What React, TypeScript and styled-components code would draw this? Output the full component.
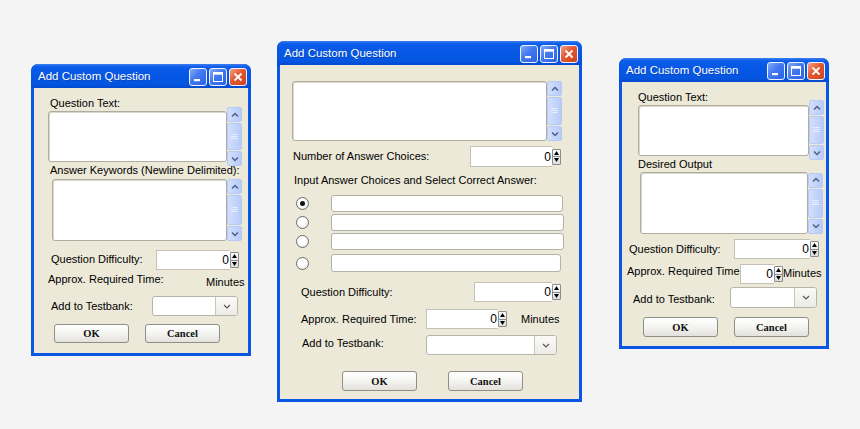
import React from "react";
import styled, { createGlobalStyle } from "styled-components";

const GlobalStyle = createGlobalStyle`
  html, body {
    margin: 0;
    padding: 0;
    background: #f4f4f4;
  }
  body {
    font-family: "Liberation Sans", Arial, sans-serif;
  }
`;

const Desktop = styled.div`
  position: relative;
  width: 860px;
  height: 429px;
  overflow: hidden;
  background: #f4f4f4;
`;

const WindowFrame = styled.div<{ $x: number; $y: number; $w: number; $h: number }>`
  position: absolute;
  left: ${(p) => p.$x}px;
  top: ${(p) => p.$y}px;
  width: ${(p) => p.$w}px;
  height: ${(p) => p.$h}px;
  display: flex;
  flex-direction: column;
  background: #0b56e3;
  border-radius: 7px 7px 0 0;
`;

const TitleBar = styled.div`
  height: 24px;
  flex-shrink: 0;
  display: flex;
  align-items: center;
  justify-content: space-between;
  padding: 0 4px 0 7px;
  border-radius: 7px 7px 0 0;
  background: linear-gradient(
    to bottom,
    #3a7ef2 0%,
    #0b5ce8 12%,
    #0658e4 50%,
    #0455df 85%,
    #0349cf 100%
  );
`;

const TitleText = styled.span`
  color: #fff;
  font-size: 11.5px;
  white-space: nowrap;
  text-shadow: 1px 1px 0 rgba(10, 30, 120, 0.35);
`;

const TitleButtons = styled.div`
  display: flex;
  gap: 2px;
  align-self: flex-end;
  margin-bottom: 2px;
`;

const TitleButton = styled.div<{ $close?: boolean }>`
  width: 18px;
  height: 18px;
  box-sizing: border-box;
  border: 1px solid #eef3ff;
  border-radius: 3px;
  display: flex;
  align-items: center;
  justify-content: center;
  background: ${(p) =>
    p.$close
      ? "linear-gradient(135deg, #f3a083 0%, #e2582f 45%, #cd4320 100%)"
      : "linear-gradient(135deg, #86a9f8 0%, #4278ef 45%, #2d62e6 100%)"};
`;

const Body = styled.div`
  flex: 1;
  margin: 0 3px 3px;
  background: #ece9d8;
  display: flex;
  flex-direction: column;
`;

const Label = styled.div<{ $ml?: number; $mt?: number; $w?: number }>`
  font-size: 11px;
  line-height: 13px;
  color: #000;
  white-space: nowrap;
  flex-shrink: 0;
  margin-left: ${(p) => p.$ml ?? 0}px;
  margin-top: ${(p) => p.$mt ?? 0}px;
  width: ${(p) => (p.$w ? `${p.$w}px` : "auto")};
`;

const ScrollArea = styled.div<{ $ml: number; $mt: number }>`
  display: flex;
  align-items: center;
  margin-left: ${(p) => p.$ml}px;
  margin-top: ${(p) => p.$mt}px;
`;

const TextBox = styled.div<{ $w: number; $h: number }>`
  width: ${(p) => p.$w}px;
  height: ${(p) => p.$h}px;
  box-sizing: border-box;
  background: #fff;
  border: 1px solid #aeaba0;
  border-radius: 3px;
  box-shadow: inset 1px 1px 0 #dcd9cf;
`;

const ScrollBar = styled.div<{ $h: number }>`
  width: 15px;
  height: ${(p) => p.$h}px;
  display: flex;
  flex-direction: column;
  gap: 1px;
  flex-shrink: 0;
`;

const ScrollButton = styled.div`
  height: 15px;
  flex-shrink: 0;
  box-sizing: border-box;
  border: 1px solid #b7c9f5;
  border-radius: 2px;
  background: linear-gradient(to right, #d3defc, #c2d3fb 60%, #b7cbf9);
  display: flex;
  align-items: center;
  justify-content: center;
`;

const Thumb = styled(ScrollButton)`
  flex: 1;
  height: auto;
`;

const Field = styled.div<{ $mt: number; $pl: number }>`
  display: flex;
  align-items: flex-start;
  margin-top: ${(p) => p.$mt}px;
  padding-left: ${(p) => p.$pl}px;
`;

const SpinWrap = styled.div`
  display: flex;
  align-items: center;
  flex-shrink: 0;
`;

const SpinBox = styled.div<{ $w: number; $h: number }>`
  width: ${(p) => p.$w}px;
  height: ${(p) => p.$h}px;
  box-sizing: border-box;
  background: #fff;
  border: 1px solid #c3c1b8;
  border-right: none;
  font-size: 12px;
  color: #000;
  display: flex;
  align-items: center;
  justify-content: flex-end;
  padding-right: 1px;
`;

const SpinArrows = styled.div`
  width: 9px;
  height: 16px;
  box-sizing: border-box;
  border: 1px solid #8c8c8c;
  border-radius: 1px;
  background: linear-gradient(to bottom, #fdfdfd, #dedede);
  display: flex;
  flex-direction: column;
`;

const SpinArrow = styled.div<{ $down?: boolean }>`
  flex: 1;
  display: flex;
  align-items: center;
  justify-content: center;
  border-top: ${(p) => (p.$down ? "1px solid #8c8c8c" : "none")};
`;

const ComboBox = styled.div<{ $w: number; $h: number }>`
  width: ${(p) => p.$w}px;
  height: ${(p) => p.$h}px;
  box-sizing: border-box;
  flex-shrink: 0;
  display: flex;
  background: #fff;
  border: 1px solid #b7b4aa;
  border-radius: 3px;
  overflow: hidden;
`;

const ComboField = styled.div`
  flex: 1;
`;

const ComboButton = styled.div`
  width: 21px;
  border-left: 1px solid #c9c6bc;
  background: linear-gradient(to bottom, #fafaf8, #ecebe6);
  display: flex;
  align-items: center;
  justify-content: center;
`;

const ButtonRow = styled.div<{ $mt: number; $pl: number; $gap: number }>`
  display: flex;
  gap: ${(p) => p.$gap}px;
  margin-top: ${(p) => p.$mt}px;
  padding-left: ${(p) => p.$pl}px;
`;

const DialogButton = styled.div<{ $h: number }>`
  width: 75px;
  height: ${(p) => p.$h}px;
  box-sizing: border-box;
  border: 1px solid #8f8f8a;
  border-radius: 3px;
  background: linear-gradient(to bottom, #ffffff 0%, #f4f4f1 50%, #e2e1dc 100%);
  display: flex;
  align-items: center;
  justify-content: center;
  font-family: "Liberation Serif", "Times New Roman", serif;
  font-size: 10.5px;
  font-weight: bold;
  color: #111;
`;

const ChoiceRow = styled.div<{ $mt: number }>`
  display: flex;
  align-items: center;
  margin-top: ${(p) => p.$mt}px;
  padding-left: 16px;
  gap: 22px;
`;

const Radio = styled.div<{ $checked?: boolean }>`
  width: 13px;
  height: 13px;
  box-sizing: border-box;
  flex-shrink: 0;
  border-radius: 50%;
  border: 1px solid #6b6b6b;
  background: radial-gradient(circle at 40% 35%, #ffffff 40%, #e4e2da 100%);
  display: flex;
  align-items: center;
  justify-content: center;

  &::after {
    content: "";
    display: ${(p) => (p.$checked ? "block" : "none")};
    width: 5px;
    height: 5px;
    border-radius: 50%;
    background: #111;
  }
`;

const ChoiceInput = styled.div<{ $w: number; $h: number }>`
  width: ${(p) => p.$w}px;
  height: ${(p) => p.$h}px;
  box-sizing: border-box;
  background: #fff;
  border: 1px solid #b3b0a6;
  border-radius: 3px;
`;

const Window = ({
  x,
  y,
  w,
  h,
  children,
}: {
  x: number;
  y: number;
  w: number;
  h: number;
  children: React.ReactNode;
}) => (
  <WindowFrame $x={x} $y={y} $w={w} $h={h}>
    <TitleBar>
      <TitleText>Add Custom Question</TitleText>
      <TitleButtons>
        <TitleButton>
          <svg width="12" height="12" viewBox="0 0 12 12">
            <rect x="2" y="8" width="6" height="2.2" fill="#fff" />
          </svg>
        </TitleButton>
        <TitleButton>
          <svg width="12" height="12" viewBox="0 0 12 12">
            <rect x="1.5" y="1.5" width="9" height="9" fill="none" stroke="#fff" strokeWidth="1" />
            <rect x="1.5" y="1.5" width="9" height="2.2" fill="#fff" />
          </svg>
        </TitleButton>
        <TitleButton $close>
          <svg width="12" height="12" viewBox="0 0 12 12">
            <path d="M2.5 2.5 L9.5 9.5 M9.5 2.5 L2.5 9.5" stroke="#fff" strokeWidth="1.8" />
          </svg>
        </TitleButton>
      </TitleButtons>
    </TitleBar>
    <Body>{children}</Body>
  </WindowFrame>
);

const Scroll = ({ h }: { h: number }) => (
  <ScrollBar $h={h}>
    <ScrollButton>
      <svg width="8" height="6" viewBox="0 0 8 6">
        <path d="M1 4.5 L4 1.5 L7 4.5" fill="none" stroke="#4d6185" strokeWidth="1.5" />
      </svg>
    </ScrollButton>
    <Thumb>
      <svg width="7" height="6" viewBox="0 0 7 6">
        <path d="M0 0.5 H7 M0 2.5 H7 M0 4.5 H7" stroke="#e6edfe" strokeWidth="1" />
      </svg>
    </Thumb>
    <ScrollButton>
      <svg width="8" height="6" viewBox="0 0 8 6">
        <path d="M1 1.5 L4 4.5 L7 1.5" fill="none" stroke="#4d6185" strokeWidth="1.5" />
      </svg>
    </ScrollButton>
  </ScrollBar>
);

const TextArea = ({
  ml,
  mt,
  w,
  h,
  sh,
}: {
  ml: number;
  mt: number;
  w: number;
  h: number;
  sh: number;
}) => (
  <ScrollArea $ml={ml} $mt={mt}>
    <TextBox $w={w} $h={h} />
    <Scroll h={sh} />
  </ScrollArea>
);

const Spinner = ({ w, h = 20 }: { w: number; h?: number }) => (
  <SpinWrap>
    <SpinBox $w={w} $h={h}>0</SpinBox>
    <SpinArrows>
      <SpinArrow>
        <svg width="5" height="4" viewBox="0 0 5 4">
          <path d="M0 4 L2.5 0 L5 4 Z" fill="#000" />
        </svg>
      </SpinArrow>
      <SpinArrow $down>
        <svg width="5" height="4" viewBox="0 0 5 4">
          <path d="M0 0 L2.5 4 L5 0 Z" fill="#000" />
        </svg>
      </SpinArrow>
    </SpinArrows>
  </SpinWrap>
);

const Combo = ({ w, h = 20 }: { w: number; h?: number }) => (
  <ComboBox $w={w} $h={h}>
    <ComboField />
    <ComboButton>
      <svg width="8" height="5" viewBox="0 0 8 5">
        <path d="M1 1 L4 4 L7 1" fill="none" stroke="#555" strokeWidth="1.1" />
      </svg>
    </ComboButton>
  </ComboBox>
);

const Buttons = ({ mt, pl, gap, h = 20 }: { mt: number; pl: number; gap: number; h?: number }) => (
  <ButtonRow $mt={mt} $pl={pl} $gap={gap}>
    <DialogButton $h={h}>OK</DialogButton>
    <DialogButton $h={h}>Cancel</DialogButton>
  </ButtonRow>
);

const App = () => {
  return (
    <Desktop>
      <GlobalStyle />

      <Window x={31} y={64} w={220} h={292}>
        <Label $ml={16} $mt={9}>Question Text:</Label>
        <TextArea ml={14} mt={-3} w={179} h={51} sh={59} />
        <Label $ml={16} $mt={-2}>Answer Keywords (Newline Delimited):</Label>
        <TextArea ml={18} mt={2} w={175} h={62} sh={62} />
        <Field $mt={9} $pl={17}>
          <Label $w={105} $mt={3}>Question Difficulty:</Label>
          <Spinner w={74} />
        </Field>
        <Field $mt={3} $pl={14}>
          <Label $w={158}>Approx. Required Time:</Label>
          <Label $mt={3}>Minutes</Label>
        </Field>
        <Field $mt={7} $pl={17}>
          <Label $w={101} $mt={4}>Add to Testbank:</Label>
          <Combo w={86} />
        </Field>
        <Buttons mt={8} pl={20} gap={16} h={19} />
      </Window>

      <Window x={277} y={41} w={305} h={361}>
        <TextArea ml={12} mt={16} w={255} h={60} sh={60} />
        <Field $mt={5} $pl={13}>
          <Label $w={177} $mt={4}>Number of Answer Choices:</Label>
          <Spinner w={82} h={21} />
        </Field>
        <Label $ml={14} $mt={7}>Input Answer Choices and Select Correct Answer:</Label>
        <ChoiceRow $mt={8}>
          <Radio $checked />
          <ChoiceInput $w={232} $h={17} />
        </ChoiceRow>
        <ChoiceRow $mt={2}>
          <Radio />
          <ChoiceInput $w={233} $h={17} />
        </ChoiceRow>
        <ChoiceRow $mt={2}>
          <Radio />
          <ChoiceInput $w={233} $h={17} />
        </ChoiceRow>
        <ChoiceRow $mt={4}>
          <Radio />
          <ChoiceInput $w={230} $h={18} />
        </ChoiceRow>
        <Field $mt={10} $pl={21}>
          <Label $w={173} $mt={4}>Question Difficulty:</Label>
          <Spinner w={78} />
        </Field>
        <Field $mt={7} $pl={21}>
          <Label $w={125} $mt={4}>Approx. Required Time:</Label>
          <Spinner w={72} />
          <Label $ml={14} $mt={4}>Minutes</Label>
        </Field>
        <Field $mt={6} $pl={22}>
          <Label $w={124} $mt={2}>Add to Testbank:</Label>
          <Combo w={131} />
        </Field>
        <Buttons mt={16} pl={62} gap={31} />
      </Window>

      <Window x={619} y={58} w={210} h={291}>
        <Label $ml={16} $mt={9}>Question Text:</Label>
        <TextArea ml={16} mt={-4} w={171} h={51} sh={60} />
        <Label $ml={16} $mt={-2}>Desired Output</Label>
        <TextArea ml={18} mt={1} w={168} h={62} sh={61} />
        <Field $mt={5} $pl={7}>
          <Label $w={105} $mt={4}>Question Difficulty:</Label>
          <Spinner w={76} />
        </Field>
        <Field $mt={5} $pl={5}>
          <Label $w={113} $mt={1}>Approx. Required Time:</Label>
          <Spinner w={34} />
          <Label $mt={3}>Minutes</Label>
        </Field>
        <Field $mt={3} $pl={11}>
          <Label $w={97} $mt={6}>Add to Testbank:</Label>
          <Combo w={87} h={21} />
        </Field>
        <Buttons mt={9} pl={21} gap={16} />
      </Window>
    </Desktop>
  );
};

export default App;
